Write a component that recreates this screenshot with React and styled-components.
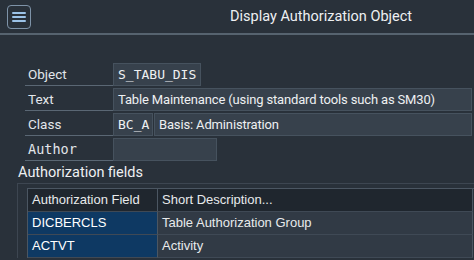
import React from "react";
import styled, { createGlobalStyle } from "styled-components";

const GlobalStyle = createGlobalStyle`
  body {
    margin: 0;
    background: #29313a;
    overflow: hidden;
  }
`;

const Page = styled.div`
  width: 474px;
  height: 260px;
  background: #29313a;
  font-family: Roboto, "Noto Sans", sans-serif;
  color: #eef0f2;
`;

const Header = styled.div`
  height: 33px;
  display: flex;
  align-items: center;
  border-bottom: 2px solid #56636f;
`;

const MenuButton = styled.div`
  width: 22px;
  height: 22px;
  margin-left: 7px;
  border: 1px solid #7e93a8;
  border-radius: 4px;
  display: flex;
  align-items: center;
  justify-content: center;
`;

const Title = styled.div`
  margin-left: 199px;
  font-size: 14.5px;
  color: #eef0f2;
`;

const Form = styled.div`
  display: flex;
  flex-direction: column;
  gap: 2px;
  padding: 28px 0 0 25px;
`;

const Row = styled.div`
  display: flex;
  height: 23px;
`;

const mono = '"DejaVu Sans Mono", monospace';
const sans = 'Roboto, "Noto Sans", sans-serif';

const Label = styled.div`
  width: 85px;
  padding-left: 3px;
  border-bottom: 1px solid #5a6774;
  font-family: ${(p) => (p.$mono ? mono : sans)};
  font-size: 13.5px;
  line-height: 22px;
  color: #e2e6ea;
`;

const Value = styled.div`
  box-sizing: border-box;
  width: ${(p) => p.$w}px;
  height: 23px;
  margin-right: 1px;
  padding-left: 4px;
  background: #37414c;
  border: 1px solid #46525e;
  font-family: ${(p) => (p.$mono ? mono : sans)};
  font-size: ${(p) => (p.$mono ? "13px" : "13px")};
  letter-spacing: ${(p) => (p.$mono ? "0" : "-0.15px")};
  line-height: 21px;
  white-space: nowrap;
  overflow: hidden;
  color: #eef0f2;
`;

const SectionTitle = styled.div`
  margin: 2px 0 0 18px;
  font-size: 14.5px;
  line-height: 19px;
  color: #eef0f2;
`;

const Group = styled.div`
  margin: 1px 0 0 17px;
  border-top: 1px solid #3d4651;
  border-left: 1px solid #3d4651;
  padding: 4px 0 0 9px;
`;

const Table = styled.div`
  display: grid;
  grid-template-columns: 130px 315px;
  border-top: 1px solid #4b5662;
  border-left: 1px solid #4b5662;
  font-family: "Liberation Sans", Arial, sans-serif;
  font-size: 13px;
`;

const Cell = styled.div`
  height: 22px;
  line-height: 22px;
  padding-left: 4px;
  border-right: 1px solid #4b5662;
  border-bottom: 1px solid #3f4955;
  background: ${(p) => (p.$head ? "#1f262e" : p.$key ? "#0e3963" : "#313a45")};
  color: ${(p) => (p.$key ? "#ffffff" : "#e8eaec")};
  white-space: nowrap;
`;

const MenuIcon = () => (
  <svg width="14" height="12" viewBox="0 0 14 12">
    <rect x="0" y="1" width="14" height="2" rx="1" fill="#9cc3e8" />
    <rect x="0" y="5" width="14" height="2" rx="1" fill="#9cc3e8" />
    <rect x="0" y="9" width="14" height="2" rx="1" fill="#9cc3e8" />
  </svg>
);

const fields = [
  ["DICBERCLS", "Table Authorization Group"],
  ["ACTVT", "Activity"],
];

export default function App() {
  return (
    <Page>
      <GlobalStyle />
      <Header>
        <MenuButton>
          <MenuIcon />
        </MenuButton>
        <Title>Display Authorization Object</Title>
      </Header>
      <Form>
        <Row>
          <Label>Object</Label>
          <Value $w={88} $mono>S_TABU_DIS</Value>
        </Row>
        <Row>
          <Label>Text</Label>
          <Value $w={359}>Table Maintenance (using standard tools such as SM30)</Value>
        </Row>
        <Row>
          <Label>Class</Label>
          <Value $w={40} $mono>BC_A</Value>
          <Value $w={318}>Basis: Administration</Value>
        </Row>
        <Row>
          <Label $mono>Author</Label>
          <Value $w={104} />
        </Row>
      </Form>
      <SectionTitle>Authorization fields</SectionTitle>
      <Group>
        <Table>
          <Cell $head>Authorization Field</Cell>
          <Cell $head>Short Description...</Cell>
          {fields.map(([k, d]) => (
            <React.Fragment key={k}>
              <Cell $key>{k}</Cell>
              <Cell>{d}</Cell>
            </React.Fragment>
          ))}
        </Table>
      </Group>
    </Page>
  );
}
